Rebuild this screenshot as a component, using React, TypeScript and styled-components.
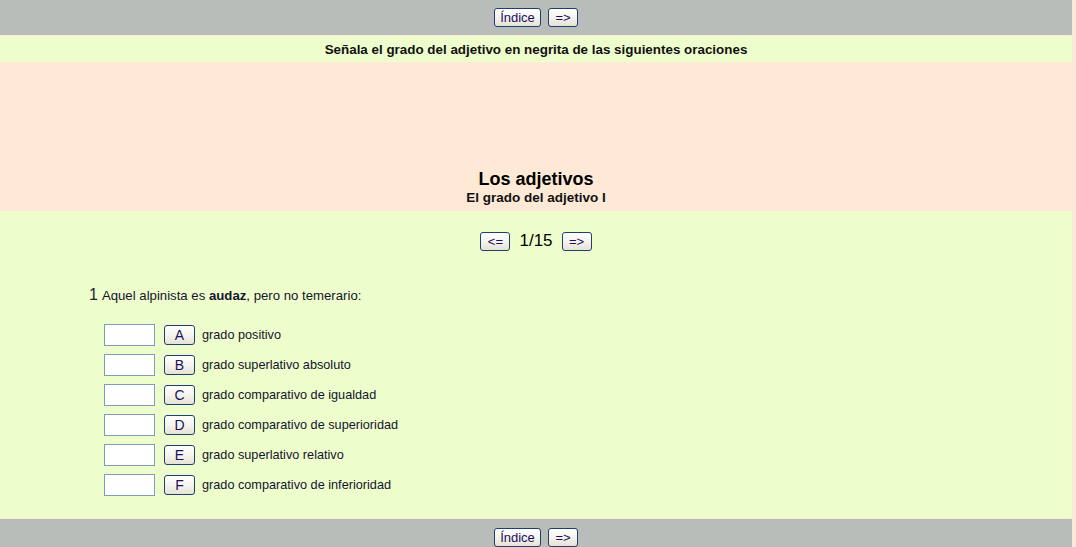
import React from "react";
import styled, { createGlobalStyle } from "styled-components";

const Global = createGlobalStyle`
  html, body { margin: 0; padding: 0; background: #fde9d6; }
  body { font-family: "Liberation Sans", Arial, sans-serif; color: #14142e; }
`;

const Page = styled.div`
  width: 1072px;
  display: flex;
  flex-direction: column;
`;

const Bar = styled.div<{ $h: number; $pt: number; $mt?: number }>`
  height: ${(p) => p.$h}px;
  margin-top: ${(p) => p.$mt ?? 0}px;
  background: #b8bdba;
  display: flex;
  justify-content: center;
  align-items: flex-start;
  gap: 7px;
  padding-top: ${(p) => p.$pt}px;
  box-sizing: border-box;
`;

const Btn = styled.button<{ $w: number; $h?: number; $fs?: number }>`
  width: ${(p) => p.$w}px;
  height: ${(p) => p.$h ?? 19}px;
  padding: 0;
  margin: 0;
  border: 1px solid #1f3f6e;
  border-radius: 3px;
  background: linear-gradient(#ffffff 0%, #f6f5ef 45%, #e6e3d6 100%);
  font-family: "Liberation Sans", Arial, sans-serif;
  font-size: ${(p) => p.$fs ?? 13}px;
  color: #1a1060;
  line-height: 1;
  display: flex;
  align-items: center;
  justify-content: center;
  cursor: pointer;
`;

const Instruction = styled.div`
  margin-top: 1px;
  height: 26px;
  background: #eefdcc;
  display: flex;
  align-items: center;
  justify-content: center;
  font-size: 13.4px;
  font-weight: bold;
  color: #111;
`;

const Header = styled.div`
  height: 149px;
  display: flex;
  flex-direction: column;
  justify-content: flex-end;
  align-items: center;
  padding-bottom: 5px;
  box-sizing: border-box;
  color: #000;
`;

const Title = styled.div`
  font-size: 18px;
  font-weight: bold;
  line-height: 21px;
`;

const Subtitle = styled.div`
  font-size: 13.5px;
  font-weight: bold;
  line-height: 16px;
  color: #111;
`;

const Main = styled.div`
  height: 307px;
  background: #eefdcc;
  padding-top: 20px;
  box-sizing: border-box;
`;

const Nav = styled.div`
  display: flex;
  justify-content: center;
  align-items: center;
  gap: 9px;
`;

const Counter = styled.span`
  font-size: 17px;
  color: #000;
`;

const Question = styled.div`
  margin-top: 35px;
  margin-left: 89px;
  display: flex;
  align-items: baseline;
  gap: 4px;
  font-size: 13.2px;
`;

const QNum = styled.span`
  font-size: 16px;
  color: #223;
`;

const Options = styled.div`
  margin-top: 20px;
  margin-left: 104px;
  display: flex;
  flex-direction: column;
  gap: 8px;
`;

const Row = styled.div`
  display: flex;
  align-items: center;
  height: 22px;
`;

const Box = styled.input`
  width: 51px;
  height: 22px;
  box-sizing: border-box;
  border: 1px solid #7f9db9;
  background: #fff;
  margin: 0 9px 0 0;
  padding: 0;
`;

const Label = styled.span`
  margin-left: 7px;
  font-size: 12.7px;
  color: #14142e;
`;

const options = [
  ["A", "grado positivo"],
  ["B", "grado superlativo absoluto"],
  ["C", "grado comparativo de igualdad"],
  ["D", "grado comparativo de superioridad"],
  ["E", "grado superlativo relativo"],
  ["F", "grado comparativo de inferioridad"],
];

export default function App() {
  return (
    <>
      <Global />
      <Page>
        <Bar $h={35} $pt={8}>
          <Btn $w={47}>Índice</Btn>
          <Btn $w={30}>=&gt;</Btn>
        </Bar>
        <Instruction>Señala el grado del adjetivo en negrita de las siguientes oraciones</Instruction>
        <Header>
          <Title>Los adjetivos</Title>
          <Subtitle>El grado del adjetivo I</Subtitle>
        </Header>
        <Main>
          <Nav>
            <Btn $w={30}>&lt;=</Btn>
            <Counter>1/15</Counter>
            <Btn $w={30}>=&gt;</Btn>
          </Nav>
          <Question>
            <QNum>1</QNum>
            <span>
              Aquel alpinista es <b>audaz</b>, pero no temerario:
            </span>
          </Question>
          <Options>
            {options.map(([l, t]) => (
              <Row key={l}>
                <Box type="text" />
                <Btn $w={31} $h={20} $fs={14}>{l}</Btn>
                <Label>{t}</Label>
              </Row>
            ))}
          </Options>
        </Main>
        <Bar $h={29} $pt={9} $mt={1}>
          <Btn $w={47}>Índice</Btn>
          <Btn $w={30}>=&gt;</Btn>
        </Bar>
      </Page>
    </>
  );
}
